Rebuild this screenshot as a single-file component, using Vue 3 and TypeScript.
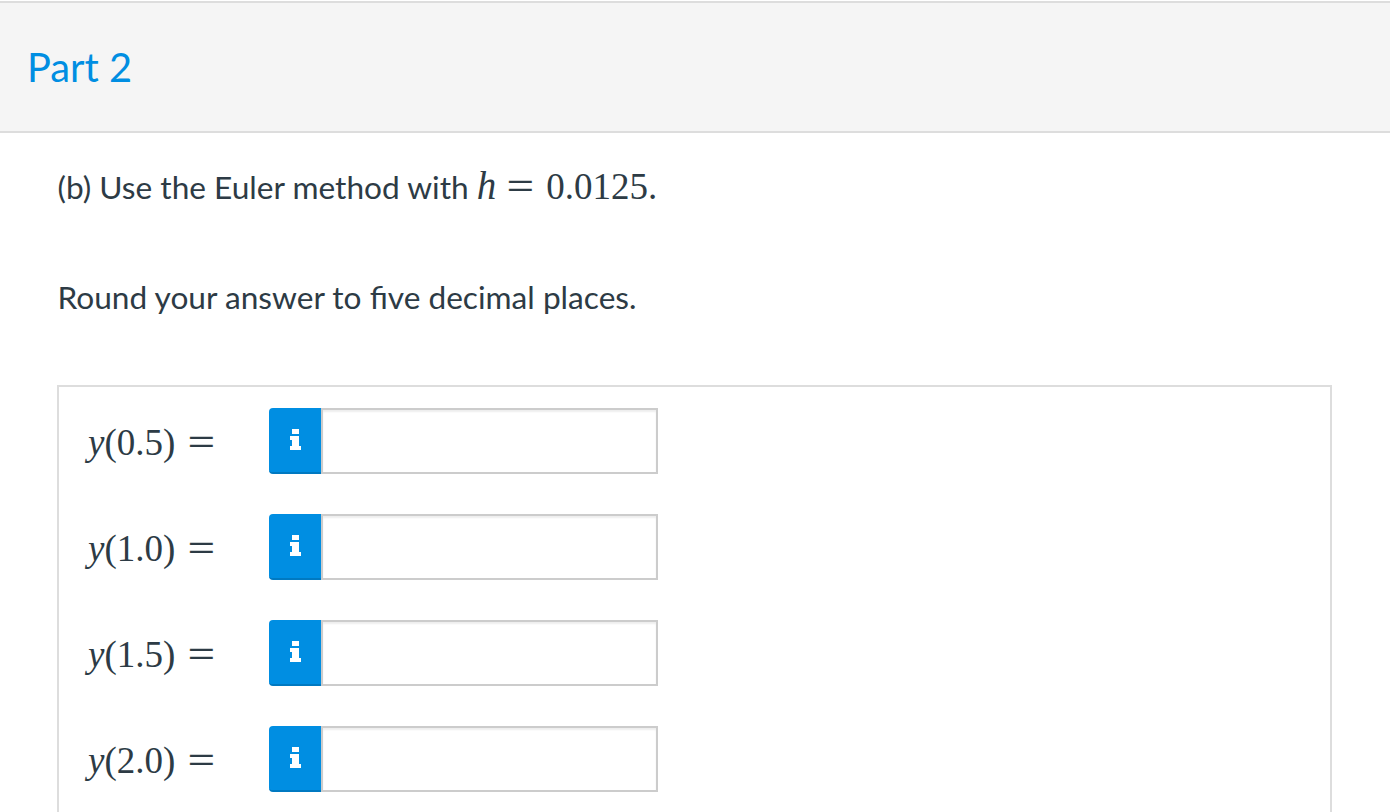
<script setup lang="ts">
const rows: string[] = ['(0.5)', '(1.0)', '(1.5)', '(2.0)']
</script>

<template>
  <div class="page">
    <header class="head"><h2 class="title">Part 2</h2></header>
    <main class="body">
      <p class="line first">(b) Use the Euler method with <span class="math inline"><i class="h">h</i><span class="eq eq1">=</span>0.0125.</span></p>
      <p class="line second">Round your answer to five decimal places.</p>
      <section class="box">
        <div v-for="r in rows" :key="r" class="row">
          <div class="label math"><i>y</i>{{ r }}<span class="eq eq2">=</span></div>
          <div class="field">
            <span class="info">
              <svg width="14" height="24" viewBox="0 0 14 24" fill="#fff" aria-hidden="true">
                <rect x="4" y="1" width="7" height="5" />
                <path d="M2 8h9v10h2v4H2v-4h2v-6H2z" />
              </svg>
            </span>
            <input class="input" type="text" />
          </div>
        </div>
      </section>
    </main>
  </div>
</template>

<style>
html, body { margin: 0; background: #fff; overflow: hidden; }
</style>

<style scoped>
.page { width: 1390px; height: 812px; overflow: hidden; font-family: Lato, sans-serif; color: #2d3b45; opacity: .999; }
.head { margin-top: 1px; height: 128px; background: #f5f5f5; border-top: 2px solid #ddd; border-bottom: 2px solid #ddd; display: flex; align-items: center; padding-left: 27px; }
.title { margin: 0; font-size: 39.8px; font-weight: 400; color: #008ee2; line-height: 1; }
.body { padding: 0 58px; }
.line { margin: 0 0 0 -0.5px; font-size: 31.65px; line-height: 44px; height: 44px; white-space: nowrap; }
.first { margin-top: 32px; }
.second { margin-top: 66px; }
.math { font-family: "Liberation Serif", serif; font-size: 37px; }
.inline { line-height: 0; }
.h { font-size: 39px; line-height: 0; }
.eq { display: inline-block; margin: 0 14px; line-height: 0; transform: scaleX(1.3); -webkit-text-stroke: .3px currentColor; }
.eq1 { margin-right: 15px; }
.box { margin: 66px 0 0 -1px; height: 500px; box-sizing: border-box; border: 2px solid #ddd; padding: 21px 27px; display: flex; flex-direction: column; gap: 40px; }
.row { display: flex; align-items: center; height: 66px; }
.label { width: 183px; box-sizing: border-box; padding: 2px 0 0 2px; flex: none; white-space: nowrap; line-height: 66px; height: 66px; }
.eq2 { margin-left: 16px; }
.field { display: flex; height: 66px; width: 389px; }
.info { width: 52px; flex: none; box-sizing: border-box; background: #008ee2; border-bottom: 2px solid #0079c1; border-radius: 4px 0 0 4px; display: flex; align-items: center; justify-content: center; }
.input { flex: 1; min-width: 0; box-sizing: border-box; height: 66px; border: 2px solid #ccc; background: #fff; box-shadow: inset 0 2px 2px rgba(0,0,0,.07); padding: 0; outline: none; }
</style>
